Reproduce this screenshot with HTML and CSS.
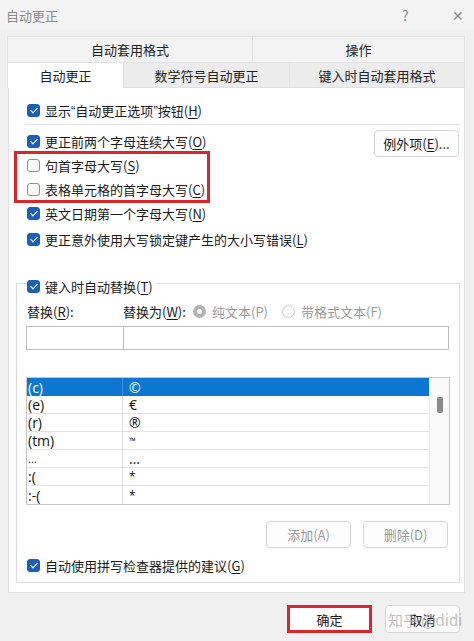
FILE: index.html
```html
<!DOCTYPE html>
<html lang="zh-CN">
<head>
  <meta charset="UTF-8" />
  <title>自动更正</title>
  <link rel="stylesheet" href="styles.css">
</head>
<body>

  <div class="dialog">
    <div class="titlebar">
      <span class="title">自动更正</span>
      <span class="help">?</span>
      <span class="close">✕</span>
    </div>

    <div class="tabs">
      <div class="tab-row row-top">
        <div class="tab">自动套用格式</div>
        <div class="tab">操作</div>
      </div>
      <div class="tab-row row-bottom">
        <div class="tab active">自动更正</div>
        <div class="tab">数学符号自动更正</div>
        <div class="tab">键入时自动套用格式</div>
      </div>
    </div>

    <div class="panel">
      <div class="opt first"><span class="box on"></span>显示<span class="q">“</span>自动更正选项<span class="q">”</span>按钮(<u>H</u>)</div>
      <div class="sep"></div>

      <div class="opts">
        <div class="opts-left">
          <div class="opt"><span class="box on"></span>更正前两个字母连续大写(<u>O</u>)</div>
          <div class="highlight">
            <div class="opt"><span class="box"></span>句首字母大写(<u>S</u>)</div>
            <div class="opt"><span class="box"></span>表格单元格的首字母大写(<u>C</u>)</div>
          </div>
          <div class="opt"><span class="box on"></span>英文日期第一个字母大写(<u>N</u>)</div>
          <div class="opt last"><span class="box on"></span>更正意外使用大写锁定键产生的大小写错误(<u>L</u>)</div>
        </div>
        <button class="btn btn-except">例外项(<u>E</u>)...</button>
      </div>

      <div class="group">
        <div class="legend"><span class="box on"></span>键入时自动替换(<u>T</u>)</div>
        <div class="labels">
          <span class="lbl-replace">替换(<u>R</u>):</span>
          <span class="lbl-with">替换为(<u>W</u>):</span>
          <span class="radio sel"></span><span class="dim">纯文本(P)</span>
          <span class="radio"></span><span class="dim">带格式文本(F)</span>
        </div>
        <div class="inputs">
          <div class="field f1"></div>
          <div class="field f2"></div>
        </div>

        <div class="list">
          <div class="rows">
            <div class="row selected"><span class="c1">(c)</span><span class="c2">©</span></div>
            <div class="row"><span class="c1">(e)</span><span class="c2">€</span></div>
            <div class="row"><span class="c1">(r)</span><span class="c2">®</span></div>
            <div class="row"><span class="c1">(tm)</span><span class="c2 tm">™</span></div>
            <div class="row"><span class="c1 small">...</span><span class="c2">…</span></div>
            <div class="row"><span class="c1">:(</span><span class="c2 star">*</span></div>
            <div class="row"><span class="c1">:-(</span><span class="c2 star">*</span></div>
          </div>
          <div class="scroll"><div class="thumb"></div></div>
        </div>

        <div class="list-btns">
          <button class="btn btn-dis">添加(A)</button>
          <button class="btn btn-dis">删除(D)</button>
        </div>

        <div class="opt spell"><span class="box on"></span>自动使用拼写检查器提供的建议(<u>G</u>)</div>
      </div>
    </div>

    <div class="footer">
      <button class="btn btn-ok">确定</button>
      <div class="cancel-wrap">
        <button class="btn btn-cancel">取消</button>
        <span class="watermark">知乎 @didi</span>
      </div>
    </div>
  </div>

</body>
</html>
```

FILE: styles.css
```css
body {
  margin: 0;
  font-family: "Noto Sans CJK SC", "Noto Sans", sans-serif;
  font-size: 13px;
  color: #1a1a1a;
  background: #f0f0f0;
}
u {
  text-decoration-thickness: 1px;
  text-underline-offset: 2px;
}
.q {
  font-family: "Liberation Sans", sans-serif;
}
.dialog {
  width: 474px;
  height: 641px;
  background: #f0f0f0;
  display: flex;
  flex-direction: column;
  overflow: hidden;
}
.titlebar {
  height: 30px;
  display: flex;
  align-items: center;
  padding: 0 0 0 6px;
  background: #f4f4f4;
  color: #8a8a8a;
  margin-bottom: 6px;
}
.title {
  flex: 1;
}
.help {
  width: 12px;
  font-size: 14px;
  margin-right: 38px;
}
.close {
  width: 22px;
  font-size: 14px;
}

/* tabs */
.tabs {
  margin: 0 9px 0 8px;
}
.tab-row {
  display: grid;
}
.row-top {
  grid-template-columns: 245px 1fr;
  height: 26px;
}
.row-bottom {
  grid-template-columns: 116px 166px 1fr;
  height: 25px;
}
.tab {
  display: flex;
  align-items: center;
  justify-content: center;
  background: #f3f3f3;
  border: 1px solid #e2e2e2;
  border-bottom: none;
  margin-left: -1px;
  color: #222;
}
.row-bottom .tab {
  background: #ececec;
}
.row-bottom .tab.active {
  background: #fff;
  position: relative;
  z-index: 1;
  margin-bottom: -1px;
}

/* panel */
.panel {
  background: #fff;
  border: 1px solid #e0e0e0;
  margin: 0 9px 0 8px;
  padding: 10px 4px 9px 7px;
}
.opt {
  height: 24px;
  display: flex;
  align-items: center;
  padding-left: 11px;
  white-space: nowrap;
}
.opt.last {
  margin-top: 2px;
}
.box {
  width: 13px;
  height: 13px;
  box-sizing: border-box;
  border: 1px solid #8f8f8f;
  border-radius: 3px;
  background: #fafafa;
  margin-right: 5px;
  position: relative;
  flex: none;
}
.box.on {
  background: #1b5fb8;
  border-color: #1b5fb8;
}
.box.on::after {
  content: "";
  position: absolute;
  left: 3.5px;
  top: 1px;
  width: 3px;
  height: 6px;
  border-right: 1.5px solid #fff;
  border-bottom: 1.5px solid #fff;
  transform: rotate(45deg);
}
.sep {
  height: 1px;
  background: #e4e4e4;
  margin: 2px 0 4px 10px;
}
.opts {
  display: flex;
  justify-content: space-between;
  align-items: flex-start;
}
.highlight {
  position: relative;
}
.highlight::after {
  content: "";
  position: absolute;
  left: -2px;
  top: -2px;
  width: 196px;
  bottom: -2px;
  border: 3px solid #d7262c;
  box-sizing: border-box;
}
.btn {
  font-family: inherit;
  font-size: 13px;
  background: #fdfdfd;
  border: 1px solid #d6d6d6;
  border-radius: 4px;
  color: #1a1a1a;
  padding: 0;
}
.btn-except {
  width: 85px;
  height: 27px;
  margin: 1px 1px 0 0;
}

/* group box */
.group {
  margin-top: 32px;
  border: 1px solid #dcdcdc;
  padding: 0 9px 7px 9px;
}
.legend {
  display: flex;
  width: fit-content;
  align-items: center;
  height: 20px;
  margin: -8px 0 0 1px;
  background: #fff;
  padding-right: 3px;
}
.labels {
  display: flex;
  align-items: center;
  height: 20px;
  margin-top: 5px;
  padding-left: 1px;
}
.lbl-replace {
  width: 96px;
}
.lbl-with {
  width: 70px;
}
.dim {
  color: #9a9a9a;
  margin-right: 14px;
}
.radio {
  width: 13px;
  height: 13px;
  box-sizing: border-box;
  border-radius: 50%;
  border: 1px solid #c9c9c9;
  margin-right: 6px;
}
.radio.sel {
  border: 4px solid #b3b3b3;
  background: #f4f4f4;
}
.inputs {
  display: flex;
  margin-top: 5px;
  height: 24px;
}
.field {
  border: 1px solid #bcbcbc;
  background: #fff;
}
.f1 {
  width: 96px;
}
.f2 {
  flex: 1;
  margin-left: -1px;
  margin-right: 1px;
}

/* list */
.list {
  margin-top: 27px;
  display: flex;
  border: 1px solid #c6c6c6;
  font-family: "Open Sans", "Noto Sans", sans-serif;
  font-size: 14px;
  color: #111;
}
.rows {
  flex: 1;
}
.row {
  display: flex;
  height: 18px;
  align-items: center;
  border-bottom: 1px solid #e2e2e2;
  box-sizing: border-box;
}
.row:last-child {
  border-bottom: none;
}
.row.selected {
  background: #0b77d3;
  color: #fff;
  border-bottom: none;
}
.c1 {
  width: 94px;
  padding-left: 1px;
  border-right: 1px solid #dadada;
  height: 100%;
  display: flex;
  align-items: center;
}
.selected .c1 {
  border-right-color: #3a8fdb;
}
.c2 {
  padding-left: 6px;
}
.tm {
  font-size: 9px;
  align-self: flex-start;
  padding-top: 2px;
}
.star {
  font-size: 12px;
}
.small {
  font-size: 11px;
}
.scroll {
  width: 19px;
  background: #f9f9f9;
  border-left: 1px solid #ececec;
  display: flex;
  justify-content: center;
}
.thumb {
  width: 6px;
  height: 16px;
  margin-top: 19px;
  background: #8a8a8a;
  border-radius: 2px;
}
.list-btns {
  display: flex;
  justify-content: flex-end;
  gap: 12px;
  margin: 16px 2px 0 0;
}
.btn-dis {
  width: 85px;
  height: 27px;
  color: #9a9a9a;
}
.spell {
  margin-top: 7px;
  height: 20px;
  padding-left: 1px;
}

/* footer */
.footer {
  flex: 1;
  display: flex;
  justify-content: flex-end;
  align-items: flex-start;
  padding: 12px 14px 0 0;
  gap: 13px;
}
.btn-ok {
  width: 85px;
  height: 28px;
  border: 3px solid #d7262c;
  border-radius: 0;
  background: #fff;
}
.cancel-wrap {
  position: relative;
}
.btn-cancel {
  width: 75px;
  height: 28px;
}
.watermark {
  position: absolute;
  left: 3px;
  top: 4px;
  font-size: 15px;
  color: rgba(170, 170, 170, 0.75);
  white-space: nowrap;
  pointer-events: none;
}
```
